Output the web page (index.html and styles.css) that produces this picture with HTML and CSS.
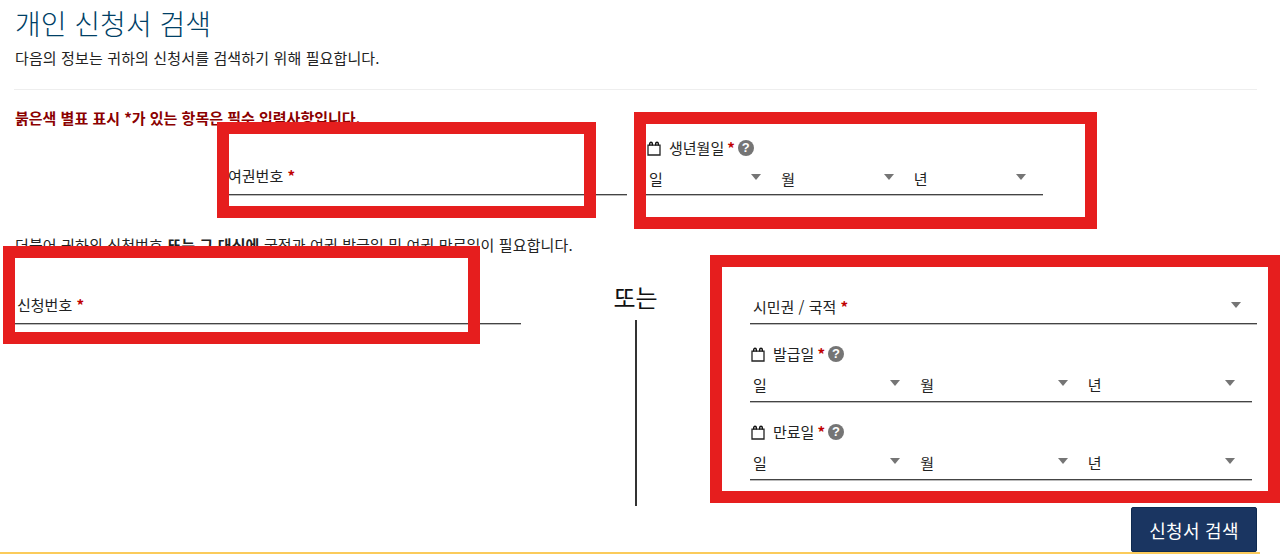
FILE: index.html
```html
<!DOCTYPE html>
<html lang="ko">
<head>
	<meta charset="utf-8">
	<title>개인 신청서 검색</title>
	<link rel="stylesheet" href="styles.css">
</head>
<body>
	<div class="page">
		<h1 class="title">개인 신청서 검색</h1>
		<p class="intro">다음의 정보는 귀하의 신청서를 검색하기 위해 필요합니다.</p>
		<hr class="rule">
		<p class="required_note">붉은색 별표 표시 *가 있는 항목은 필수 입력사항입니다.</p>

		<div class="top_row">
			<div class="field passport">
				<label class="text_label">여권번호 <span class="star">*</span></label>
			</div>
			<div class="date_field dob">
				<div class="date_label">
					<svg class="cal" viewBox="0 0 14 15"><path d="M1 4.2h12v9.8H1z" fill="none" stroke="#222" stroke-width="1.3"/><path d="M2.7 4.5V2.6a1.2 1.2 0 0 1 2.6 0v1.9 M8.7 4.5V2.6a1.2 1.2 0 0 1 2.6 0v1.9" fill="none" stroke="#111" stroke-width="1.4"/></svg>
					<span class="date_text">생년월일</span> <span class="star">*</span> <span class="help">?</span>
				</div>
				<div class="selects">
					<div class="sel"><span>일</span><i class="arrow"></i></div>
					<div class="sel"><span>월</span><i class="arrow"></i></div>
					<div class="sel"><span>년</span><i class="arrow"></i></div>
				</div>
			</div>
		</div>

		<p class="also">더불어 귀하의 신청번호 <b>또는 그 대신에</b> 국적과 여권 발급일 및 여권 만료일이 필요합니다.</p>

		<div class="bottom_row">
			<div class="field app_no">
				<label class="text_label">신청번호 <span class="star">*</span></label>
			</div>
			<div class="or_col">
				<div class="or_text">또는</div>
				<div class="or_line"></div>
			</div>
			<div class="right_col">
				<div class="citizen">
					<span>시민권 / 국적 <span class="star">*</span></span><i class="arrow"></i>
				</div>
				<div class="date_field issue">
					<div class="date_label">
						<svg class="cal" viewBox="0 0 14 15"><path d="M1 4.2h12v9.8H1z" fill="none" stroke="#222" stroke-width="1.3"/><path d="M2.7 4.5V2.6a1.2 1.2 0 0 1 2.6 0v1.9 M8.7 4.5V2.6a1.2 1.2 0 0 1 2.6 0v1.9" fill="none" stroke="#111" stroke-width="1.4"/></svg>
						<span class="date_text">발급일</span> <span class="star">*</span> <span class="help">?</span>
					</div>
					<div class="selects">
						<div class="sel"><span>일</span><i class="arrow"></i></div>
						<div class="sel"><span>월</span><i class="arrow"></i></div>
						<div class="sel"><span>년</span><i class="arrow"></i></div>
					</div>
				</div>
				<div class="date_field issue">
					<div class="date_label">
						<svg class="cal" viewBox="0 0 14 15"><path d="M1 4.2h12v9.8H1z" fill="none" stroke="#222" stroke-width="1.3"/><path d="M2.7 4.5V2.6a1.2 1.2 0 0 1 2.6 0v1.9 M8.7 4.5V2.6a1.2 1.2 0 0 1 2.6 0v1.9" fill="none" stroke="#111" stroke-width="1.4"/></svg>
						<span class="date_text">만료일</span> <span class="star">*</span> <span class="help">?</span>
					</div>
					<div class="selects">
						<div class="sel"><span>일</span><i class="arrow"></i></div>
						<div class="sel"><span>월</span><i class="arrow"></i></div>
						<div class="sel"><span>년</span><i class="arrow"></i></div>
					</div>
				</div>
			</div>
		</div>

		<div class="actions">
			<button class="search_btn">신청서 검색</button>
		</div>

		<div class="mark mark1"></div>
		<div class="mark mark2"></div>
		<div class="mark mark3"></div>
		<div class="mark mark4"></div>
	</div>
</body>
</html>
```

FILE: styles.css
```css
html, body {
	margin: 0;
	background: #FFFFFF;
	overflow: hidden;
}
body {
	height: 554px;
	color: #222222;
	font-family: "Noto Sans CJK KR", "Liberation Sans", sans-serif;
	font-size: 15px;
}
.page {
	position: relative;
	box-sizing: border-box;
	width: 1260px;
	height: 554px;
	padding: 5px 3px 0 15px;
	border-bottom: 2px solid #FBCB5B;
}
.title {
	margin: 0;
	height: 36px;
	color: #003F66;
	font-size: 28px;
	font-weight: 300;
	line-height: 36px;
}
.intro {
	margin: 7px 0 0;
	line-height: 20px;
	letter-spacing: 0.13px;
}
.rule {
	margin: 21px 0 0 -1px;
	border: 0;
	border-top: 1px solid #EEEEEE;
}
.required_note {
	margin: 18px 0 0;
	color: #8B0000;
	font-weight: 700;
	line-height: 20px;
}
.star {
	color: #C00000;
	font-weight: 700;
}
.top_row {
	display: flex;
	gap: 19px;
	margin-left: 213px;
	height: 73px;
	margin-top: -6px;
}
.field {
	display: flex;
	align-items: flex-end;
	box-sizing: border-box;
	border-bottom: 1px solid #444444;
	box-shadow: 0 1px 0 #BBBBBB;
	padding-bottom: 8px;
	line-height: 20px;
}
.passport {
	width: 399px;
}
.dob {
	width: 397px;
	padding-top: 16px;
}
.date_field {
	display: flex;
	flex-direction: column;
}
.date_label {
	display: flex;
	align-items: center;
	gap: 3px;
	height: 20px;
	padding-left: 1px;
	line-height: 20px;
}
.date_text {
	margin-left: 5px;
}
.cal {
	width: 14px;
	height: 15px;
}
.help {
	display: inline-block;
	width: 16px;
	height: 16px;
	border-radius: 50%;
	background: #757575;
	color: #FFFFFF;
	font-family: "Liberation Sans", sans-serif;
	font-size: 13px;
	font-weight: 700;
	line-height: 16px;
	text-align: center;
}
.selects {
	display: flex;
	box-sizing: border-box;
	height: 37px;
	border-bottom: 1px solid #444444;
	box-shadow: 0 1px 0 #BBBBBB;
	padding-top: 11px;
}
.sel {
	display: flex;
	flex: 1;
	align-items: flex-start;
	justify-content: space-between;
	padding: 0 17px 0 3px;
	line-height: 20px;
}
.arrow {
	display: block;
	width: 0;
	height: 0;
	margin-top: 5px;
	border-top: 6px solid #757575;
	border-left: 5.5px solid transparent;
	border-right: 5.5px solid transparent;
}
.also {
	margin: 40px 0 0;
	line-height: 20px;
	letter-spacing: 0.13px;
}
.bottom_row {
	display: flex;
	margin-top: 2px;
}
.app_no {
	width: 506px;
	height: 67px;
	padding-left: 2px;
}
.or_col {
	display: flex;
	flex-direction: column;
	align-items: center;
	width: 229px;
}
.or_text {
	margin-top: 25px;
	color: #111111;
	font-size: 24px;
	line-height: 30px;
}
.or_line {
	width: 2px;
	height: 186px;
	margin-top: 8px;
	background: #333333;
}
.right_col {
	width: 507px;
}
.citizen {
	display: flex;
	align-items: center;
	justify-content: space-between;
	box-sizing: border-box;
	height: 67px;
	padding: 39px 16px 6px 3px;
	border-bottom: 1px solid #444444;
	box-shadow: 0 1px 0 #BBBBBB;
	line-height: 20px;
}
.citizen .arrow {
	margin-top: -4px;
}
.issue {
	width: 502px;
	margin-top: 20px;
}
.issue .selects {
	height: 38px;
}
.actions {
	position: absolute;
	top: 507px;
	right: 3px;
}
.search_btn {
	width: 126px;
	height: 45px;
	border: 1px solid #0F2A50;
	border-radius: 2px;
	background: #1A3561;
	color: #FFFFFF;
	font-family: "Noto Sans CJK KR", "Liberation Sans", sans-serif;
	font-size: 18px;
	letter-spacing: 0.3px;
}
.mark {
	position: absolute;
	box-sizing: border-box;
	border: 12px solid #E61E1E;
}
.mark1 {
	left: 217px;
	top: 122px;
	width: 379px;
	height: 96px;
}
.mark2 {
	left: 634px;
	top: 112px;
	width: 463px;
	height: 117px;
}
.mark3 {
	left: 3px;
	top: 246px;
	width: 477px;
	height: 98px;
}
.mark4 {
	left: 710px;
	top: 255px;
	width: 570px;
	height: 248px;
}
```
